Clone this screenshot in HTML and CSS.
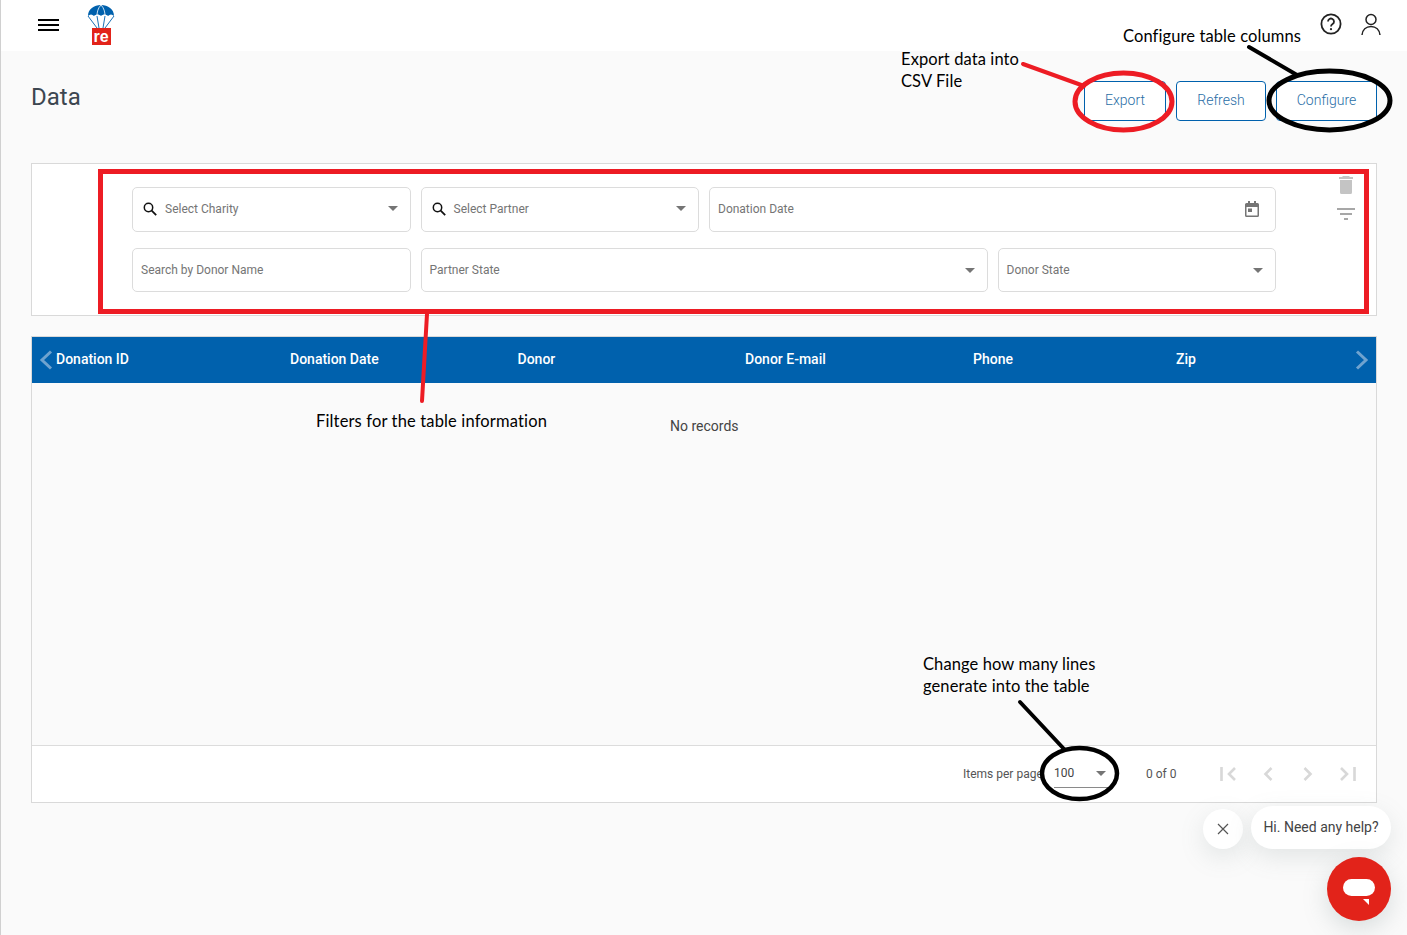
FILE: index.html
```html
<!DOCTYPE html>
<html lang="en">
<head>
<meta charset="utf-8">
<title>Data</title>
<link rel="stylesheet" href="styles.css">
</head>
<body>
<div class="page">
  <header class="topbar">
    <div class="brand">
      <svg class="menu-icon" width="22" height="12" viewBox="0 0 22 12"><path d="M0 1h21M0 6h21M0 11h21" stroke="#000" stroke-width="2"/></svg>
      <div class="logo">
        <svg width="28" height="24" viewBox="0 0 28 24">
          <path d="M1 11C1 4 7 0 14 0s13 4 13 11c-2-2-4-2-6 0-2-2-5-2-7 0-2-2-5-2-7 0-2-2-4-2-6 0z" fill="#0061ad"/>
          <path d="M14 0c-3 3-4 7-4 11M14 0c3 3 4 7 4 11" stroke="#fff" stroke-width=".8" fill="none"/>
          <path d="M1 11l9 12M27 11l-9 12M10 11l2 12M18 11l-2 12" stroke="#0061ad" stroke-width=".9" fill="none"/>
        </svg>
        <span class="logo-box">re</span>
      </div>
    </div>
    <div class="top-actions">
      <svg width="24" height="24" viewBox="0 0 24 24" fill="none"><circle cx="12" cy="12" r="9.6" stroke="#222" stroke-width="1.8"/><path d="M9 9.600a3 3 0 1 1 4.600 2.500c-1 .7-1.600 1.200-1.600 2.500" stroke="#222" stroke-width="1.800"/><circle cx="12" cy="17.200" r="1.100" fill="#222"/></svg>
      <svg width="24" height="24" viewBox="0 0 24 24" fill="none"><circle cx="12" cy="7.500" r="5" stroke="#222" stroke-width="1.500"/><path d="M3 23c.5-5 4-8.500 9-8.500s8.500 3.500 9 8.500" stroke="#222" stroke-width="1.500"/></svg>
    </div>
  </header>

  <main class="content">
    <div class="title-row">
      <h1 class="title">Data</h1>
      <div class="buttons">
        <button class="btn btn-export">Export</button>
        <button class="btn btn-refresh">Refresh</button>
        <button class="btn btn-configure">Configure</button>
      </div>
    </div>

    <section class="filters">
      <div class="filter-grid">
        <div class="field">
          <svg class="search" width="16" height="16" viewBox="0 0 16 16" fill="none"><circle cx="6.500" cy="6.500" r="4.200" stroke="#111" stroke-width="1.500"/><path d="M9.700 9.700l4.500 4.500" stroke="#111" stroke-width="1.800"/></svg>
          <span class="label">Select Charity</span><i class="caret"></i>
        </div>
        <div class="field">
          <svg class="search" width="16" height="16" viewBox="0 0 16 16" fill="none"><circle cx="6.500" cy="6.500" r="4.200" stroke="#111" stroke-width="1.500"/><path d="M9.700 9.700l4.500 4.500" stroke="#111" stroke-width="1.800"/></svg>
          <span class="label">Select Partner</span><i class="caret"></i>
        </div>
        <div class="field span-2">
          <span class="label">Donation Date</span>
          <svg class="calendar" width="14" height="16" viewBox="0 0 14 16"><path d="M3 0h2v2h4V0h2v2h1.500A1.500 1.500 0 0 1 14 3.500v11a1.500 1.500 0 0 1-1.500 1.500h-11A1.500 1.500 0 0 1 0 14.500v-11A1.500 1.500 0 0 1 1.500 2H3zM1.500 6v8.500h11V6z" fill="#757575"/><rect x="3" y="7.500" width="4" height="3.500" fill="#757575"/></svg>
        </div>
        <div class="field field-short"><span class="label">Search by Donor Name</span></div>
        <div class="field field-short span-2"><span class="label">Partner State</span><i class="caret"></i></div>
        <div class="field field-short"><span class="label">Donor State</span><i class="caret"></i></div>
      </div>
      <div class="filter-tools">
        <svg width="14" height="18" viewBox="0 0 14 18"><path d="M4 0h6l1 1h3v2H0V1h3zM1 4h12v12.500a1.500 1.500 0 0 1-1.500 1.500h-9A1.500 1.500 0 0 1 1 16.500z" fill="#c4c4c4"/></svg>
        <svg width="18" height="12" viewBox="0 0 18 12"><path d="M0 1h18M3 6h12M7 11h4" stroke="#8a8a8a" stroke-width="1.600"/></svg>
      </div>
    </section>

    <section class="table-card">
      <div class="table-head">
        <svg class="arrow" width="14" height="20" viewBox="0 0 14 20" fill="none"><path d="M12 1.500L3 10l9 8.500" stroke="#6fa3cf" stroke-width="3"/></svg>
        <div class="cols">
          <span class="col">Donation ID</span>
          <span class="col">Donation Date</span>
          <span class="col">Donor</span>
          <span class="col">Donor E-mail</span>
          <span class="col">Phone</span>
          <span class="col">Zip</span>
        </div>
        <svg class="arrow" width="14" height="20" viewBox="0 0 14 20" fill="none"><path d="M2 1.500L11 10l-9 8.500" stroke="#6fa3cf" stroke-width="3"/></svg>
      </div>
      <div class="table-body"><span class="empty">No records</span></div>
      <div class="table-foot">
        <span class="foot-label">Items per page</span>
        <div class="per-page"><span>100</span><i class="caret"></i></div>
        <span class="range">0 of 0</span>
        <div class="pager">
          <button class="page-btn"><svg width="16" height="14" viewBox="0 0 16 14" fill="none"><path d="M1.500 0v14M15 1L9 7l6 6" stroke="#d8d8d8" stroke-width="2.600"/></svg></button>
          <button class="page-btn"><svg width="10" height="14" viewBox="0 0 10 14" fill="none"><path d="M8.500 1l-6 6 6 6" stroke="#d8d8d8" stroke-width="2.600"/></svg></button>
          <button class="page-btn"><svg width="10" height="14" viewBox="0 0 10 14" fill="none"><path d="M1.500 1l6 6-6 6" stroke="#d8d8d8" stroke-width="2.600"/></svg></button>
          <button class="page-btn"><svg width="16" height="14" viewBox="0 0 16 14" fill="none"><path d="M14.500 0v14M1 1l6 6-6 6" stroke="#d8d8d8" stroke-width="2.600"/></svg></button>
        </div>
      </div>
    </section>
  </main>

  <div class="chat">
    <button class="chat-close"><svg width="12" height="12" viewBox="0 0 12 12" fill="none"><path d="M1 1l10 10M11 1L1 11" stroke="#555" stroke-width="1.200"/></svg></button>
    <div class="chat-bubble">Hi. Need any help?</div>
    <button class="chat-fab"><svg width="32" height="26" viewBox="0 0 32 26"><rect width="32" height="17" rx="8.500" fill="#fff"/><path d="M20 20h6v6z" fill="#fff"/></svg></button>
  </div>

  <svg class="marks" width="1407" height="935" viewBox="0 0 1407 935" fill="none">
    <rect x="100.500" y="171.500" width="1266" height="140" stroke="#ed1c24" stroke-width="5"/>
    <ellipse cx="1123.500" cy="101.500" rx="48.500" ry="28.500" stroke="#ed1c24" stroke-width="5"/>
    <path d="M1023 64l61 22" stroke="#ed1c24" stroke-width="4" stroke-linecap="round"/>
    <path d="M427 314l-5 87" stroke="#ed1c24" stroke-width="4" stroke-linecap="round"/>
    <ellipse cx="1329.500" cy="100.500" rx="60.500" ry="29.500" stroke="#000" stroke-width="5"/>
    <path d="M1249 47l48 28" stroke="#000" stroke-width="4" stroke-linecap="round"/>
    <ellipse cx="1079.500" cy="773.500" rx="37.500" ry="25.500" stroke="#000" stroke-width="4.500"/>
    <path d="M1020 702l44 47" stroke="#000" stroke-width="4" stroke-linecap="round"/>
  </svg>
  <div class="note note-export">Export data into<br>CSV File</div>
  <div class="note note-config">Configure table columns</div>
  <div class="note note-filters">Filters for the table information</div>
  <div class="note note-lines">Change how many lines<br>generate into the table</div>
</div>
</body>
</html>
```
FILE: styles.css
```css
* { box-sizing: border-box; }
html, body { margin: 0; height: 100%; }
body { font-family: Roboto, "Liberation Sans", sans-serif; background: #fafafa; color: #333; }
button { font-family: inherit; cursor: pointer; }
.page { position: relative; width: 1407px; height: 935px; overflow: hidden; border-left: 1px solid #d0d0d0; }

.topbar { height: 51px; background: #fff; display: flex; justify-content: space-between; align-items: flex-start; padding: 0 24px 0 37px; }
.brand { display: flex; align-items: center; gap: 26px; height: 51px; }
.menu-icon { display: block; margin-top: -2px; }
.logo { display: flex; flex-direction: column; align-items: center; width: 28px; margin-top: -1px; margin-left: 1px; }
.logo svg { display: block; }
.logo-box { width: 19px; height: 17px; margin-top: -1px; background: #e2231a; color: #fff; font: 700 16px/17px "Liberation Sans", sans-serif; text-align: center; }
.top-actions { display: flex; gap: 16px; padding-top: 12px; }

.content { padding: 30px 30px 0 30px; }
.title-row { display: flex; justify-content: space-between; align-items: flex-start; height: 40px; margin-bottom: 42px; }
.title { margin: 0; font-size: 24px; font-weight: 400; line-height: 32px; color: #3c4650; }
.buttons { display: flex; gap: 10px; }
.btn { height: 40px; background: #fff; border: 1px solid #0061ad; border-radius: 4px; color: #2a6ea6; font-size: 14px; font-weight: 300; padding: 0 0 2px; }
.btn-export { width: 82px; }
.btn-refresh { width: 90px; }
.btn-configure { width: 101px; }

.filters { height: 153px; background: #fff; border: 1px solid #d9d9d9; display: flex; padding: 23px 0 0 100px; }
.filter-grid { width: 1144px; display: grid; grid-template-columns: repeat(4, 1fr); column-gap: 10px; row-gap: 16px; align-content: start; }
.field { height: 45px; display: flex; align-items: center; border: 1px solid #dcdcdc; border-radius: 5px; background: #fff; padding: 0 8px 2px; font-size: 12px; color: #757575; }
.field-short { height: 44px; padding-bottom: 0; }
.span-2 { grid-column: span 2; }
.search { margin: 0 7px 0 1px; flex: none; }
.label { flex: 1; }
.caret { width: 0; height: 0; border-left: 5px solid transparent; border-right: 5px solid transparent; border-top: 5px solid #757575; margin-right: 4px; flex: none; }
.calendar { margin-right: 8px; }
.filter-tools { flex: 1; display: flex; flex-direction: column; align-items: center; gap: 14px; margin: -11px 0 0 40px; }

.table-card { height: 467px; margin-top: 20px; border: 1px solid #d9d9d9; display: flex; flex-direction: column; }
.table-head { height: 46px; flex: none; background: #0061ad; display: flex; align-items: center; padding: 0 7px 0 7px; color: #fff; font-size: 14px; font-weight: 500; }
.arrow { flex: none; }
.cols { flex: 1; display: grid; grid-template-columns: 234px 227.500px 227.500px 228px 203px 1fr; padding: 0 0 2px 3px; }
.table-body { flex: 1; padding-top: 35px; padding-left: 638px; font-size: 14px; color: #444; }
.table-foot { height: 57px; flex: none; background: #fff; border-top: 1px solid #dcdcdc; display: flex; align-items: center; justify-content: flex-end; padding-right: 8px; font-size: 12px; color: #555; }
.foot-label { width: 91px; }
.per-page { width: 54px; height: 26px; display: flex; align-items: center; justify-content: space-between; border-bottom: 1px solid #8a8a8a; padding-bottom: 2px; margin-top: 1px; color: #444; }
.per-page .caret { margin-right: 2px; }
.range { width: 62px; margin-left: 38px; }
.pager { display: flex; }
.page-btn { width: 40px; height: 40px; background: none; border: 0; padding: 0; display: flex; align-items: center; justify-content: center; }

.chat { position: absolute; right: 16px; bottom: 14px; width: 188px; height: 115px; display: grid; grid-template-columns: 40px 140px; column-gap: 8px; align-content: start; }
.chat-close { width: 40px; height: 40px; margin-top: 3px; border: 0; border-radius: 50%; background: #fff; box-shadow: 0 8px 24px rgba(120,140,140,.18); display: flex; align-items: center; justify-content: center; padding: 0; }
.chat-bubble { height: 43px; background: #fff; border-radius: 22px; display: flex; align-items: center; justify-content: center; font-size: 14px; color: #444; box-shadow: 0 8px 24px rgba(120,140,140,.18); padding-bottom: 2px; }
.chat-fab { grid-column: 2; justify-self: end; width: 64px; height: 64px; margin-top: 8px; border: 0; border-radius: 50%; background: #e2231a; display: flex; align-items: center; justify-content: center; padding: 6px 0 0; box-shadow: 0 8px 24px rgba(120,140,140,.25); }

.marks { position: absolute; left: -1px; top: 0; pointer-events: none; }
.note { position: absolute; font-family: Lato, "Open Sans", sans-serif; font-size: 16.500px; line-height: 22px; color: #000; white-space: nowrap; letter-spacing: .1px; }
.note-export { left: 900px; top: 48px; }
.note-config { left: 1122px; top: 25px; }
.note-filters { left: 315px; top: 410px; letter-spacing: .15px; }
.note-lines { left: 922px; top: 653px; }
```
